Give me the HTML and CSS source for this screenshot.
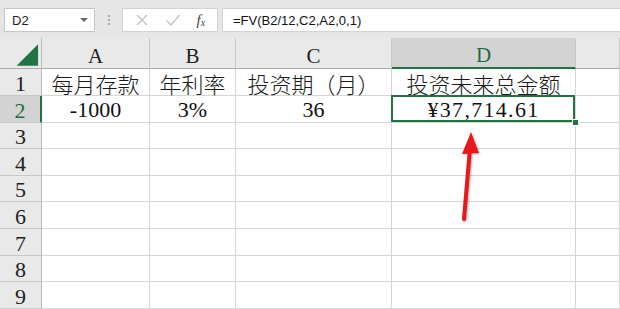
FILE: index.html
```html
<!DOCTYPE html>
<html lang="zh-CN">
<head>
  <meta charset="UTF-8">
  <title>FV 公式</title>
  <link rel="stylesheet" href="styles.css">
</head>
<body>
<div class="topbar">
  <div class="namebox"><span>D2</span><span class="caret"></span></div>
  <div class="grip"><i></i><i></i><i></i></div>
  <div class="fnbox">
    <svg class="btn" width="14" height="14" viewBox="0 0 14 14"><path d="M2 2L12 12M12 2L2 12" stroke="#c4c4c4" stroke-width="1.4" fill="none"/></svg>
    <svg class="btn" width="16" height="14" viewBox="0 0 16 14"><path d="M1.5 7.5L6 12L14.5 2" stroke="#c4c4c4" stroke-width="1.4" fill="none"/></svg>
    <span class="fx"><i>f</i><sub>x</sub></span>
  </div>
  <div class="formula">=FV(B2/12,C2,A2,0,1)</div>
</div>

<div class="sheet">
  <div class="corner"><svg width="42" height="31" viewBox="0 0 42 31"><polygon points="17,28 39,28 39,6" fill="#217346"/></svg></div>
  <div class="colhead">A</div>
  <div class="colhead">B</div>
  <div class="colhead">C</div>
  <div class="colhead on">D</div>
  <div class="colhead"></div>

  <div class="rowhead">1</div>
  <div class="cell cjk">每月存款</div>
  <div class="cell cjk">年利率</div>
  <div class="cell cjk">投资期（月）</div>
  <div class="cell cjk">投资未来总金额</div>
  <div class="cell"></div>

  <div class="rowhead on">2</div>
  <div class="cell num">-1000</div>
  <div class="cell num">3%</div>
  <div class="cell num">36</div>
  <div class="cell num money sel">¥37,714.61</div>
  <div class="cell"></div>

  <div class="rowhead">3</div><div class="cell"></div><div class="cell"></div><div class="cell"></div><div class="cell"></div><div class="cell"></div>
  <div class="rowhead">4</div><div class="cell"></div><div class="cell"></div><div class="cell"></div><div class="cell"></div><div class="cell"></div>
  <div class="rowhead">5</div><div class="cell"></div><div class="cell"></div><div class="cell"></div><div class="cell"></div><div class="cell"></div>
  <div class="rowhead">6</div><div class="cell"></div><div class="cell"></div><div class="cell"></div><div class="cell"></div><div class="cell"></div>
  <div class="rowhead">7</div><div class="cell"></div><div class="cell"></div><div class="cell"></div><div class="cell"></div><div class="cell"></div>
  <div class="rowhead">8</div><div class="cell"></div><div class="cell"></div><div class="cell"></div><div class="cell"></div><div class="cell"></div>
  <div class="rowhead">9</div><div class="cell"></div><div class="cell"></div><div class="cell"></div><div class="cell"></div><div class="cell"></div>
</div>

<svg class="arrow" width="620" height="309" viewBox="0 0 620 309">
  <line x1="464" y1="219" x2="470" y2="148" stroke="#e8191c" stroke-width="4" stroke-linecap="round"/>
  <polygon points="471,132 462,154 479,153" fill="#e8191c"/>
</svg>
</body>
</html>
```

FILE: styles.css
```css
body {
  margin: 0;
  background: #e6e6e6;
  font-family: 'Liberation Serif', 'Noto Sans CJK SC', serif;
  overflow: hidden;
}
.topbar {
  display: flex;
  height: 38px;
  box-sizing: border-box;
  padding: 8px 0 6px 4px;
  background: #e6e6e6;
}
.namebox {
  width: 91px;
  box-sizing: border-box;
  background: #fff;
  border: 1px solid #c6c6c6;
  display: flex;
  align-items: center;
  justify-content: space-between;
  padding: 0 6px 0 7px;
  font: 13px 'Liberation Sans', sans-serif;
  color: #222;
}
.caret {
  width: 0;
  height: 0;
  border-left: 4px solid transparent;
  border-right: 4px solid transparent;
  border-top: 4px solid #6a6a6a;
}
.grip {
  width: 27px;
  display: flex;
  flex-direction: column;
  align-items: center;
  justify-content: center;
  gap: 2px;
}
.grip i { width: 2px; height: 2px; background: #a8a8a8; }
.fnbox {
  width: 96px;
  margin-right: 4px;
  box-sizing: border-box;
  background: #fff;
  border: 1px solid #d4d4d4;
  display: flex;
  align-items: center;
  justify-content: space-around;
  padding: 0 4px;
}
.fx { font: italic 15px 'Liberation Serif', serif; color: #444; }
.fx sub { font-size: 10px; vertical-align: -1px; }
.formula {
  flex: 1;
  background: #fff;
  border: 1px solid #d4d4d4;
  border-right: none;
  display: flex;
  align-items: center;
  padding-left: 10px;
  font: 13px 'Liberation Sans', sans-serif;
  color: #111;
}
.sheet {
  display: grid;
  grid-template-columns: 42px 108px 86px 156px 184px 44px;
  grid-template-rows: 31px 27px 27px 26px 27px 26px 27px 27px 26px 27px;
  background: #fff;
}
.sheet > div {
  box-sizing: border-box;
  display: flex;
  align-items: center;
  justify-content: center;
}
.corner {
  background: #e9e9e9;
  border-right: 1px solid #bdbdbd;
  border-bottom: 1px solid #ababab;
}
.corner svg { display: block; }
.colhead {
  background: #e9e9e9;
  border-right: 1px solid #c8c8c8;
  border-bottom: 1px solid #ababab;
  font-size: 21px;
  color: #222;
  padding-top: 6px;
}
.colhead.on {
  background: #d3d3d3;
  border-bottom: 2px solid #217346;
  color: #1e6b40;
}
.rowhead {
  background: #e9e9e9;
  border-right: 1px solid #bdbdbd;
  border-bottom: 1px solid #c8c8c8;
  font-size: 22px;
  color: #222;
  padding-top: 3px;
}
.rowhead.on {
  background: #d3d3d3;
  border-right: 2px solid #217346;
  color: #1e6b40;
}
.cell {
  border-right: 1px solid #d6d6d6;
  border-bottom: 1px solid #d6d6d6;
  font-size: 22px;
  color: #111;
  white-space: nowrap;
  padding-top: 2px;
}
.cjk { font-weight: 300; color: #1a1a1a; }
.num { font-size: 22px; }
.money { letter-spacing: 1.3px; }
.sel { position: relative; }
.sel::before {
  content: '';
  position: absolute;
  left: -1px;
  top: -1px;
  right: 0;
  bottom: 0;
  border: 2px solid #217346;
}
.sel::after {
  content: '';
  position: absolute;
  right: -4px;
  bottom: -4px;
  width: 5px;
  height: 5px;
  background: #217346;
  border: 1px solid #fff;
}
.arrow {
  position: absolute;
  left: 0;
  top: 0;
  pointer-events: none;
  filter: drop-shadow(1px 1px 1px rgba(0, 0, 0, 0.3));
}
```
